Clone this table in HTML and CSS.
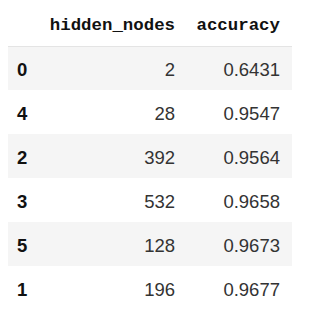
FILE: index.html
```html
<!DOCTYPE html>
<html lang="en">
<head>
    <meta charset="UTF-8">
    <title>hidden_nodes vs accuracy</title>
    <link rel="stylesheet" href="styles.css">
</head>
<body>
    <table class="dataframe">
        <thead>
            <tr>
                <th class="idx"></th>
                <th class="col-nodes">hidden_nodes</th>
                <th class="col-acc">accuracy</th>
            </tr>
        </thead>
        <tbody>
            <tr><th class="idx">0</th><td>2</td><td>0.6431</td></tr>
            <tr><th class="idx">4</th><td>28</td><td>0.9547</td></tr>
            <tr><th class="idx">2</th><td>392</td><td>0.9564</td></tr>
            <tr><th class="idx">3</th><td>532</td><td>0.9658</td></tr>
            <tr><th class="idx">5</th><td>128</td><td>0.9673</td></tr>
            <tr><th class="idx">1</th><td>196</td><td>0.9677</td></tr>
        </tbody>
    </table>
</body>
</html>
```

FILE: styles.css
```css
body {
    margin: 0;
    padding: 0 8px;
    background: #fff;
    font-family: "Liberation Sans", Arial, sans-serif;
}
.dataframe {
    border-collapse: collapse;
    border-spacing: 0;
    table-layout: fixed;
    width: 284px;
    font-size: 18.5px;
    color: #333;
}
.dataframe thead th {
    height: 46px;
    padding: 0 12px 10px 4px;
    box-sizing: border-box;
    vertical-align: bottom;
    text-align: right;
    font-family: "Liberation Mono", "DejaVu Sans Mono", monospace;
    font-size: 17.4px;
    line-height: 21px;
    font-weight: bold;
    color: #111;
    border-bottom: 1px solid #e4e4e4;
    white-space: nowrap;
}
.dataframe tbody tr {
    height: 44px;
}
.dataframe tbody tr:nth-child(odd) {
    background: #f5f5f5;
}
.dataframe td,
.dataframe tbody th {
    padding: 3px 12px 0 4px;
    text-align: right;
    line-height: 21px;
    vertical-align: middle;
}
.dataframe .idx {
    width: 28px;
    padding-left: 9px;
    padding-right: 0;
    text-align: left;
    font-weight: bold;
    color: #111;
}
.col-nodes {
    width: 151px;
}
.col-acc {
    width: 105px;
}
```
